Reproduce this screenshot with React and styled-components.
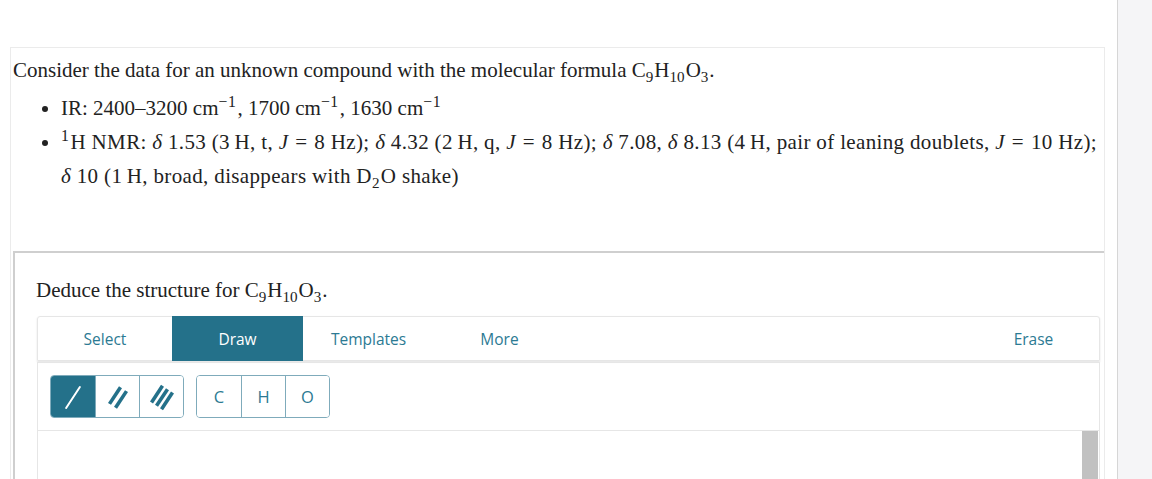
import React from "react";
import styled, { createGlobalStyle } from "styled-components";

const GlobalStyle = createGlobalStyle`
  html, body {
    margin: 0;
    padding: 0;
    background: #fff;
  }
  body {
    font-family: "Liberation Serif", "Times New Roman", serif;
    color: #222;
  }
`;

const Page = styled.div`
  display: flex;
  width: 1152px;
  height: 479px;
  overflow: hidden;
`;

const Main = styled.div`
  flex: 1;
  padding: 47px 12px 0 10px;
`;

const Sidebar = styled.div`
  width: 34px;
  border-left: 1px solid #d6d6d6;
  background: #f5f5f7;
`;

const Card = styled.div`
  border: 1px solid #ebebeb;
  border-bottom: none;
  min-height: 500px;
`;

const Question = styled.div`
  padding: 5px 2px 0 2px;
  font-size: 21px;
  line-height: 34px;
`;

const Para = styled.p`
  margin: 0;
`;

const List = styled.ul`
  margin: 4px 0 0;
  padding-left: 48px;
`;

const Item = styled.li`
  margin: 0;
  letter-spacing: ${(p) => (p.$wide ? "0.35px" : "0")};
`;

const Sub = styled.sub`
  font-size: 0.72em;
  line-height: 0;
  vertical-align: -0.3em;
  margin-right: 1px;
`;

const Sup = styled.sup`
  font-size: 0.75em;
  line-height: 0;
  vertical-align: 0.5em;
  letter-spacing: 0.6px;
  margin-right: 1px;
`;

const Var = styled.i`
  font-style: italic;
`;

const Eq = styled.span`
  margin: 0 0.33em;
`;

const Answer = styled.div`
  margin: 58px 0 0 2px;
  border-top: 2px solid #cfcfcf;
  border-left: 2px solid #cfcfcf;
  padding: 20px 4px 0 22px;
`;

const Prompt = styled.p`
  margin: 0 0 9px -1px;
  font-size: 21px;
  line-height: 34px;
`;

const Toolbar = styled.div`
  display: flex;
  height: 43px;
  border: 1px solid #e6e6e6;
  border-radius: 3px 3px 0 0;
  box-shadow: 0 1px 2px rgba(0, 0, 0, 0.12);
  font-family: "Open Sans", "Liberation Sans", sans-serif;
`;

const Tab = styled.div`
  width: ${(p) => p.$w || 131}px;
  display: flex;
  align-items: center;
  justify-content: center;
  font-size: 15.5px;
  color: ${(p) => (p.$active ? "#fff" : "#2c7a93")};
  background: ${(p) => (p.$active ? "#24718a" : "transparent")};
  margin: ${(p) => (p.$active ? "-1px 0" : "0")};
`;

const Spacer = styled.div`
  flex: 1;
`;

const ToolRow = styled.div`
  display: flex;
  gap: 12px;
  margin-top: 1px;
  padding: 12px;
  border: 1px solid #e6e6e6;
`;

const Group = styled.div`
  display: flex;
  border: 1px solid #7fabbb;
  border-radius: 4px;
  overflow: hidden;
`;

const ToolButton = styled.div`
  width: ${(p) => (p.$first ? 44 : 43)}px;
  height: 41px;
  display: flex;
  align-items: center;
  justify-content: center;
  border-left: ${(p) => (p.$first ? "none" : "1px solid #7fabbb")};
  background: ${(p) => (p.$active ? "#24718a" : "#fff")};
  color: #2c7a93;
  font-family: "Open Sans", "Liberation Sans", sans-serif;
  font-size: 16.5px;
`;

const Canvas = styled.div`
  display: flex;
  justify-content: flex-end;
  height: 120px;
  border-left: 1px solid #e6e6e6;
  border-right: 1px solid #e6e6e6;
`;

const ScrollThumb = styled.div`
  width: 16px;
  margin-right: 1px;
  background: #c1c1c1;
`;

// bond strokes: parallel slanted lines around the icon centre
const Bonds = ({ n, color }) => {
  const offsets = n === 1 ? [0] : n === 2 ? [-3.6, 3.6] : [-6, 0, 6];
  const half = n === 1 ? 12.5 : 10;
  const ux = 0.55;
  const uy = -0.835;
  return (
    <svg width="28" height="28" viewBox="0 0 28 28">
      {offsets.map((d) => {
        const cx = 14 + 0.835 * d;
        const cy = 14.5 + 0.55 * d;
        return (
          <line
            key={d}
            x1={cx - ux * half}
            y1={cy - uy * half}
            x2={cx + ux * half}
            y2={cy + uy * half}
            stroke={color}
            strokeWidth={n === 1 ? 2 : 3.6}
            strokeLinecap={n === 1 ? "round" : "butt"}
          />
        );
      })}
    </svg>
  );
};

const Formula = () => (
  <>
    C<Sub>9</Sub>H<Sub>10</Sub>O<Sub>3</Sub>
  </>
);

const Delta = () => <Var>δ</Var>;

export default function App() {
  return (
    <Page>
      <GlobalStyle />
      <Main>
        <Card>
          <Question>
            <Para>
              Consider the data for an unknown compound with the molecular
              formula <Formula />.
            </Para>
            <List>
              <Item>
                IR: 2400–3200{"\u00a0"}cm<Sup>−1</Sup>, 1700{"\u00a0"}cm
                <Sup>−1</Sup>, 1630{"\u00a0"}cm<Sup>−1</Sup>
              </Item>
              <Item $wide>
                <Sup>1</Sup>H NMR: <Delta />
                {"\u00a0"}1.53 (3{"\u2009"}H, t, <Var>J</Var>
                <Eq>=</Eq>8 Hz); <Delta />
                {"\u00a0"}4.32 (2{"\u2009"}H, q, <Var>J</Var>
                <Eq>=</Eq>8 Hz); <Delta />
                {"\u00a0"}7.08, <Delta />
                {"\u00a0"}8.13 (4{"\u2009"}H, pair of leaning doublets,{" "}
                <Var>J</Var>
                <Eq>=</Eq>10 Hz); <Delta />
                {"\u00a0"}10 (1{"\u2009"}H, broad, disappears with D
                <Sub>2</Sub>O shake)
              </Item>
            </List>
          </Question>
          <Answer>
            <Prompt>
              Deduce the structure for <Formula />.
            </Prompt>
            <Toolbar>
              <Tab $w={134}>Select</Tab>
              <Tab $active>Draw</Tab>
              <Tab>Templates</Tab>
              <Tab>More</Tab>
              <Spacer />
              <Tab>Erase</Tab>
            </Toolbar>
            <ToolRow>
              <Group>
                <ToolButton $first $active>
                  <Bonds n={1} color="#fff" />
                </ToolButton>
                <ToolButton>
                  <Bonds n={2} color="#24718a" />
                </ToolButton>
                <ToolButton>
                  <Bonds n={3} color="#24718a" />
                </ToolButton>
              </Group>
              <Group>
                <ToolButton $first>C</ToolButton>
                <ToolButton>H</ToolButton>
                <ToolButton>O</ToolButton>
              </Group>
            </ToolRow>
            <Canvas>
              <ScrollThumb />
            </Canvas>
          </Answer>
        </Card>
      </Main>
      <Sidebar />
    </Page>
  );
}
